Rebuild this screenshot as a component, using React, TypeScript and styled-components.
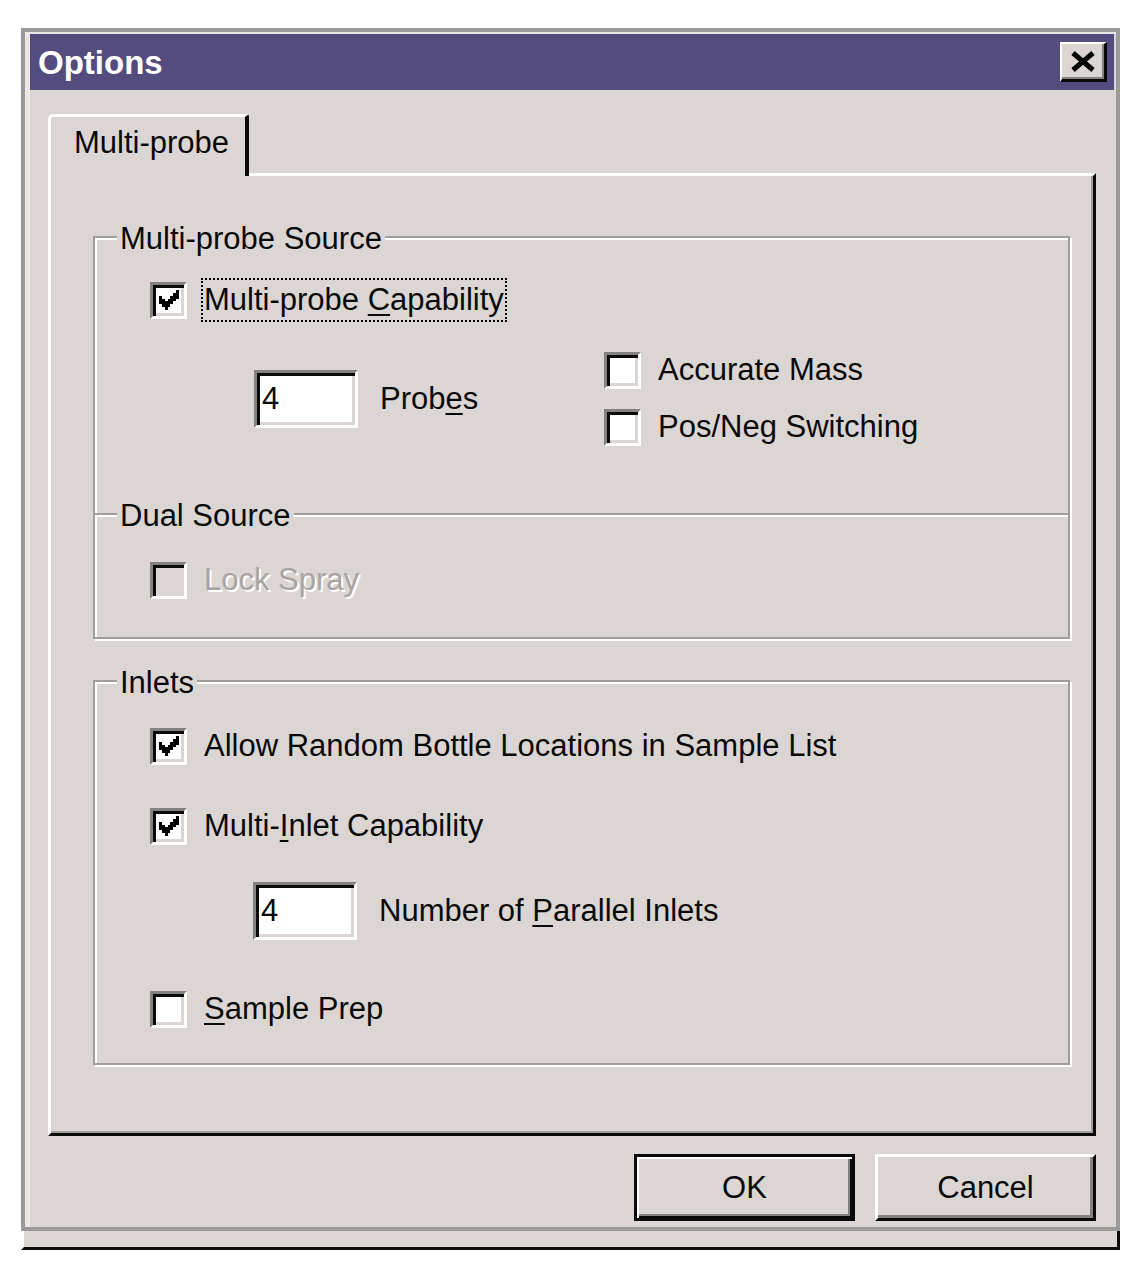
import styled, { createGlobalStyle } from 'styled-components';

const colors = {
  face: '#dbd6d3',
  light: '#ffffff',
  shadow: '#a29d9a',
  darkShadow: '#85817f',
  dark: '#0a0a0a',
  frame: '#9a9a9a',
  title: '#544c7e',
  disabled: '#aaa5a2',
};

const GlobalStyle = createGlobalStyle`
  html, body {
    margin: 0;
    padding: 0;
    background: #ffffff;
  }
  body {
    font-family: "Liberation Sans", Arial, sans-serif;
    color: #0a0a0a;
  }
`;

function CheckMark() {
  return (
    <svg width="20" height="20" viewBox="0 0 7 7" shapeRendering="crispEdges">
      <path
        d="M6 0H7V3H6V4H5V5H4V6H3V7H2V6H1V5H0V2H1V3H2V4H3V3H4V2H5V1H6Z"
        fill="#000"
      />
    </svg>
  );
}

function CloseGlyph() {
  return (
    <svg width="26" height="21" viewBox="0 0 26 21">
      <path d="M3 2 L23 19 M23 2 L3 19" stroke="#000" strokeWidth="5" />
    </svg>
  );
}

function Checkbox({
  checked,
  disabled,
  focused,
  children,
}: {
  checked?: boolean;
  disabled?: boolean;
  focused?: boolean;
  children: React.ReactNode;
}) {
  return (
    <CheckItem>
      <Box $disabled={disabled}>{checked && <CheckMark />}</Box>
      <CheckText $focused={focused} $disabled={disabled}>
        {children}
      </CheckText>
    </CheckItem>
  );
}

export default function App() {
  return (
    <Page>
      <GlobalStyle />
      <Window>
        <TitleBar>
          <Title>Options</Title>
          <CloseButton>
            <CloseGlyph />
          </CloseButton>
        </TitleBar>
        <Body>
          <TabStrip>
            <Tab>Multi-probe</Tab>
          </TabStrip>
          <Panel>
            <Group>
              <Section $pb={64}>
                <Legend>Multi-probe Source</Legend>
                <Row $mt={24}>
                  <Checkbox checked focused>
                    Multi-probe <Key>C</Key>apability
                  </Checkbox>
                </Row>
                <Row $mt={26}>
                  <ProbeColumn>
                    <TextBox>4</TextBox>
                    <FieldLabel>
                      Prob<Key>e</Key>s
                    </FieldLabel>
                  </ProbeColumn>
                  <OptionColumn>
                    <Checkbox>Accurate Mass</Checkbox>
                    <Checkbox>Pos/Neg Switching</Checkbox>
                  </OptionColumn>
                </Row>
              </Section>
              <Section $divider $pb={35}>
                <Legend>Dual Source</Legend>
                <Row $mt={27}>
                  <Checkbox disabled>Lock Spray</Checkbox>
                </Row>
              </Section>
            </Group>
            <Group $mt={41}>
              <Section $pb={32}>
                <Legend>Inlets</Legend>
                <Row $mt={26}>
                  <Checkbox checked>Allow Random Bottle Locations in Sample List</Checkbox>
                </Row>
                <Row $mt={36}>
                  <Checkbox checked>
                    Multi-<Key>I</Key>nlet Capability
                  </Checkbox>
                </Row>
                <Row $mt={34} $indent={103}>
                  <TextBox>4</TextBox>
                  <FieldLabel>
                    Number of <Key>P</Key>arallel Inlets
                  </FieldLabel>
                </Row>
                <Row $mt={47}>
                  <Checkbox>
                    <Key>S</Key>ample Prep
                  </Checkbox>
                </Row>
              </Section>
            </Group>
          </Panel>
          <ButtonRow>
            <Button $default>OK</Button>
            <Button>Cancel</Button>
          </ButtonRow>
        </Body>
      </Window>
      <StatusStrip />
    </Page>
  );
}

const Page = styled.div`
  padding: 28px 0 0 21px;
  width: 1143px;
  height: 1280px;
  box-sizing: border-box;
`;

const Window = styled.div`
  width: 1099px;
  box-sizing: border-box;
  border: 4px solid ${colors.frame};
  padding: 2px 2px 6px 5px;
  background: ${colors.face};
  box-shadow: inset 5px 2px 0 #ebe8e6;
`;

const TitleBar = styled.div`
  height: 56px;
  display: flex;
  align-items: center;
  justify-content: space-between;
  padding: 0 7px 0 8px;
  background: ${colors.title};
`;

const Title = styled.span`
  color: #ffffff;
  font-weight: bold;
  font-size: 33px;
  line-height: 1;
`;

const CloseButton = styled.div`
  width: 47px;
  height: 40px;
  box-sizing: border-box;
  display: flex;
  align-items: center;
  justify-content: center;
  background: ${colors.face};
  border-style: solid;
  border-width: 2px 3px 3px 2px;
  border-color: ${colors.light} ${colors.dark} ${colors.dark} ${colors.light};
  box-shadow: inset -2px -2px 0 ${colors.darkShadow};
`;

const Body = styled.div`
  padding: 24px 18px 0 18px;
`;

const TabStrip = styled.div`
  display: flex;
`;

const Tab = styled.div`
  position: relative;
  z-index: 1;
  width: 201px;
  box-sizing: border-box;
  margin-bottom: -3px;
  padding: 10px 0 18px 23px;
  font-size: 31px;
  line-height: 31px;
  background: ${colors.face};
  border-style: solid;
  border-width: 3px 4px 0 3px;
  border-color: ${colors.light} ${colors.dark} transparent ${colors.light};
  border-top-left-radius: 5px;
  border-top-right-radius: 3px;
`;

const Panel = styled.div`
  border-style: solid;
  border-width: 3px;
  border-color: ${colors.light} ${colors.dark} ${colors.dark} ${colors.light};
  box-shadow: inset -2px -2px 0 ${colors.shadow};
  padding: 60px 23px 68px 42px;
`;

const Group = styled.div<{ $mt?: number }>`
  margin-top: ${(p) => p.$mt ?? 0}px;
  border: 2px solid ${colors.shadow};
  box-shadow: inset 2px 2px 0 ${colors.light}, 2px 2px 0 ${colors.light};
`;

const Section = styled.div<{ $divider?: boolean; $pb: number }>`
  display: flex;
  flex-direction: column;
  padding-bottom: ${(p) => p.$pb}px;
  ${(p) =>
    p.$divider &&
    `
    border-top: 2px solid ${colors.shadow};
    box-shadow: inset 0 2px 0 ${colors.light};
  `}
`;

const Legend = styled.div`
  align-self: flex-start;
  margin: -15px 0 0 22px;
  padding: 0 3px;
  font-size: 31px;
  line-height: 31px;
  background: ${colors.face};
`;

const Row = styled.div<{ $mt: number; $indent?: number }>`
  display: flex;
  align-items: center;
  margin-top: ${(p) => p.$mt}px;
  padding-left: ${(p) => 55 + (p.$indent ?? 0)}px;
`;

const ProbeColumn = styled.div`
  width: 454px;
  box-sizing: border-box;
  padding-left: 104px;
  display: flex;
  align-items: center;
`;

const OptionColumn = styled.div`
  display: flex;
  flex-direction: column;
  gap: 13px;
`;

const CheckItem = styled.div`
  display: flex;
  align-items: center;
  height: 44px;
`;

const Box = styled.div<{ $disabled?: boolean }>`
  width: 37px;
  height: 37px;
  box-sizing: border-box;
  display: flex;
  align-items: center;
  justify-content: center;
  background: ${(p) => (p.$disabled ? colors.face : '#ffffff')};
  border-style: solid;
  border-width: 3px;
  border-color: ${colors.darkShadow} ${colors.light} ${colors.light} ${colors.darkShadow};
  box-shadow: inset 3px 3px 0 ${colors.dark}, inset -3px -3px 0 ${colors.face};
`;

const CheckText = styled.span<{ $focused?: boolean; $disabled?: boolean }>`
  margin-left: 14px;
  padding: 0 1px;
  font-size: 31px;
  line-height: 40px;
  border: 2px dotted ${(p) => (p.$focused ? '#000' : 'transparent')};
  color: ${(p) => (p.$disabled ? colors.disabled : colors.dark)};
  text-shadow: ${(p) => (p.$disabled ? `2px 2px 0 ${colors.light}` : 'none')};
`;

const Key = styled.span`
  text-decoration: underline;
  text-decoration-thickness: 2px;
  text-underline-offset: 4px;
`;

const TextBox = styled.div`
  width: 104px;
  height: 58px;
  box-sizing: border-box;
  padding-left: 5px;
  display: flex;
  align-items: center;
  background: #ffffff;
  font-size: 31px;
  border-style: solid;
  border-width: 3px;
  border-color: ${colors.darkShadow} ${colors.light} ${colors.light} ${colors.darkShadow};
  box-shadow: inset 3px 3px 0 ${colors.dark}, inset -3px -3px 0 ${colors.face};
`;

const FieldLabel = styled.span`
  margin-left: 22px;
  font-size: 31px;
`;

const ButtonRow = styled.div`
  display: flex;
  justify-content: flex-end;
  gap: 20px;
  margin-top: 18px;
`;

const Button = styled.div<{ $default?: boolean }>`
  width: 221px;
  height: 67px;
  box-sizing: border-box;
  display: flex;
  align-items: center;
  justify-content: center;
  font-size: 31px;
  background: ${colors.face};
  border-style: solid;
  border-width: 3px;
  border-color: ${(p) =>
    p.$default
      ? colors.dark
      : `${colors.light} ${colors.dark} ${colors.dark} ${colors.light}`};
  box-shadow: ${(p) =>
    p.$default
      ? `inset 2px 2px 0 ${colors.light}, inset -2px -2px 0 ${colors.dark}, inset -4px -4px 0 ${colors.darkShadow}`
      : `inset -3px -3px 0 ${colors.darkShadow}`};
`;

const StatusStrip = styled.div`
  width: 1099px;
  height: 19px;
  box-sizing: border-box;
  background: ${colors.face};
  border-style: solid;
  border-width: 0 3px 3px 3px;
  border-color: transparent ${colors.dark} ${colors.dark} ${colors.light};
`;
